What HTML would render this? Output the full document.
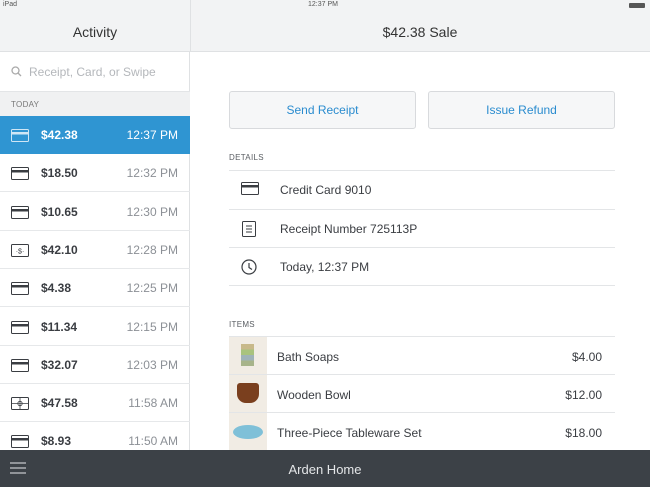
<!DOCTYPE html><html><head><style>
*{margin:0;padding:0;box-sizing:border-box}
body{width:650px;height:487px;overflow:hidden;font-family:"Liberation Sans",sans-serif;background:#fff;position:relative;color:#3a3d42}
.abs{position:absolute}
.hdr{left:0;top:0;width:650px;height:52px;background:#f2f3f4;border-bottom:1px solid #dfe1e3}
.side{left:0;top:52px;width:190px;height:398px;border-right:1px solid #dfe1e3}
.row{position:absolute;left:0;width:190px;height:38px;border-bottom:1px solid #e6e8ea;font-size:12px}
.row .amt{position:absolute;left:41px;top:12px;font-weight:bold;color:#3a3d42}
.row .tm{position:absolute;right:12px;top:12px;color:#8c9096}
.row svg{position:absolute;left:11px;top:13px}
.btn{position:absolute;top:91px;height:38px;border:1px solid #d8dadd;border-radius:3px;background:#f6f7f8;color:#2a8ccf;font-size:12px;text-align:center;line-height:37px}
.lbl{position:absolute;left:229px;font-size:8px;color:#5a5e63;letter-spacing:.3px}
.det{position:absolute;left:229px;width:386px;height:38px;border-top:1px solid #e3e5e7;font-size:12px}
.det span{position:absolute;left:51px;top:12px}
.det svg{position:absolute;left:12px;top:11px}
.it span.n{position:absolute;left:48px;top:13px}
.it span.p{position:absolute;right:13px;top:13px;left:auto}
.th{position:absolute;left:0;top:0;width:38px;height:37px;background:#f1ece4}
</style></head><body>
<div class="abs hdr"></div>
<div class="abs" style="left:3px;top:1px;font-size:7px;color:#555">iPad</div>
<div class="abs" style="left:308px;top:1px;font-size:7px;color:#555">12:37 PM</div>
<div class="abs" style="left:629px;top:3px;width:16px;height:5px;background:#555;border-radius:1px"></div>
<div class="abs" style="left:0;top:24px;width:190px;text-align:center;font-size:14px;color:#333">Activity</div>
<div class="abs" style="left:190px;top:24px;width:460px;text-align:center;font-size:14px;color:#333">$42.38 Sale</div>
<div class="abs" style="left:190px;top:0;width:1px;height:52px;background:#dfe1e3"></div>
<div class="abs side"></div>
<svg class="abs" style="left:11px;top:66px" width="11" height="11"><circle cx="4.5" cy="4.5" r="3.5" fill="none" stroke="#aaa" stroke-width="1.3"/><path d="M7 7l3 3" stroke="#aaa" stroke-width="1.3"/></svg>
<div class="abs" style="left:29px;top:65px;font-size:12px;color:#b4b7bb">Receipt, Card, or Swipe</div>
<div class="abs" style="left:0;top:91px;width:190px;height:25px;background:#f0f1f2;border-top:1px solid #e3e5e7"></div>
<div class="abs" style="left:11px;top:100px;font-size:8px;color:#777;letter-spacing:.3px">TODAY</div>
<div class="row" style="top:116px;background:#2f95d2;border:none"><svg width="18" height="13"><rect x=".5" y=".5" width="17" height="12" rx="1" fill="none" stroke="#cfe6f5"/><rect x="1" y="3" width="16" height="2.5" fill="#cfe6f5"/></svg><span class="amt" style="color:#fff">$42.38</span><span class="tm" style="color:#fff">12:37 PM</span></div>
<div class="row" style="top:154px"><svg width="18" height="13"><rect x=".5" y=".5" width="17" height="12" rx="1" fill="none" stroke="#3a3d42"/><rect x="1" y="3" width="16" height="2.5" fill="#3a3d42"/></svg><span class="amt">$18.50</span><span class="tm">12:32 PM</span></div>
<div class="row" style="top:193px"><svg width="18" height="13"><rect x=".5" y=".5" width="17" height="12" rx="1" fill="none" stroke="#3a3d42"/><rect x="1" y="3" width="16" height="2.5" fill="#3a3d42"/></svg><span class="amt">$10.65</span><span class="tm">12:30 PM</span></div>
<div class="row" style="top:231px"><svg width="18" height="13"><rect x=".5" y=".5" width="17" height="12" rx="1" fill="none" stroke="#3a3d42"/><text x="9" y="9.5" font-size="7" text-anchor="middle" fill="#3a3d42" font-family="Liberation Sans">·$·</text></svg><span class="amt">$42.10</span><span class="tm">12:28 PM</span></div>
<div class="row" style="top:269px"><svg width="18" height="13"><rect x=".5" y=".5" width="17" height="12" rx="1" fill="none" stroke="#3a3d42"/><rect x="1" y="3" width="16" height="2.5" fill="#3a3d42"/></svg><span class="amt">$4.38</span><span class="tm">12:25 PM</span></div>
<div class="row" style="top:308px"><svg width="18" height="13"><rect x=".5" y=".5" width="17" height="12" rx="1" fill="none" stroke="#3a3d42"/><rect x="1" y="3" width="16" height="2.5" fill="#3a3d42"/></svg><span class="amt">$11.34</span><span class="tm">12:15 PM</span></div>
<div class="row" style="top:346px"><svg width="18" height="13"><rect x=".5" y=".5" width="17" height="12" rx="1" fill="none" stroke="#3a3d42"/><rect x="1" y="3" width="16" height="2.5" fill="#3a3d42"/></svg><span class="amt">$32.07</span><span class="tm">12:03 PM</span></div>
<div class="row" style="top:384px"><svg width="18" height="13"><rect x=".5" y=".5" width="17" height="12" rx="1" fill="none" stroke="#3a3d42"/><path d="M1 6.5h16M9 1v11" stroke="#3a3d42" stroke-width=".8"/><circle cx="9" cy="6.5" r="2.2" fill="none" stroke="#3a3d42" stroke-width=".8"/></svg><span class="amt">$47.58</span><span class="tm">11:58 AM</span></div>
<div class="row" style="top:422px"><svg width="18" height="13"><rect x=".5" y=".5" width="17" height="12" rx="1" fill="none" stroke="#3a3d42"/><rect x="1" y="3" width="16" height="2.5" fill="#3a3d42"/></svg><span class="amt">$8.93</span><span class="tm">11:50 AM</span></div>
<div class="btn" style="left:229px;width:187px">Send Receipt</div>
<div class="btn" style="left:428px;width:187px">Issue Refund</div>
<div class="lbl" style="top:153px">DETAILS</div>
<div class="det" style="top:170px"><svg width="18" height="13"><rect x=".5" y=".5" width="17" height="12" rx="1" fill="none" stroke="#3a3d42"/><rect x="1" y="3" width="16" height="2.5" fill="#3a3d42"/></svg><span>Credit Card 9010</span></div>
<div class="det" style="top:209px"><svg width="16" height="16"><rect x="1.5" y=".5" width="13" height="15" rx="1" fill="none" stroke="#3a3d42"/><path d="M5 5h6M5 8h6M5 11h6" stroke="#3a3d42"/></svg><span>Receipt Number 725113P</span></div>
<div class="det" style="top:247px"><svg width="16" height="16"><circle cx="8" cy="8" r="7" fill="none" stroke="#3a3d42" stroke-width="1.2"/><path d="M8 4v4.5l3 2" fill="none" stroke="#3a3d42" stroke-width="1.2"/></svg><span>Today, 12:37 PM</span></div>
<div class="abs" style="left:229px;top:285px;width:386px;height:1px;background:#e3e5e7"></div>
<div class="lbl" style="top:320px">ITEMS</div>
<div class="det it" style="top:336px"><div class="th"><div class="abs" style="left:12px;top:7px;width:13px;height:22px;background:linear-gradient(#c8b98a 0 25%,#a9c37e 25% 50%,#9fb3b8 50% 75%,#a7b48a 75%)"></div></div><span class="n">Bath Soaps</span><span class="p">$4.00</span></div>
<div class="det it" style="top:374px"><div class="th"><div class="abs" style="left:8px;top:8px;width:22px;height:20px;background:#7a3f1e;border-radius:3px 3px 9px 9px"></div></div><span class="n">Wooden Bowl</span><span class="p">$12.00</span></div>
<div class="det it" style="top:412px"><div class="th"><div class="abs" style="left:4px;top:12px;width:30px;height:14px;background:#7fc0d8;border-radius:50%"></div></div><span class="n">Three-Piece Tableware Set</span><span class="p">$18.00</span></div>
<div class="abs" style="left:0;top:450px;width:650px;height:37px;background:#3c4147"></div>
<svg class="abs" style="left:10px;top:462px" width="16" height="12"><path d="M0 1h16M0 6h16M0 11h16" stroke="#c4c7ca" stroke-width="1.3"/></svg>
<div class="abs" style="left:0;top:462px;width:650px;text-align:center;font-size:13px;color:#e4e6e8">Arden Home</div>
</body></html>
